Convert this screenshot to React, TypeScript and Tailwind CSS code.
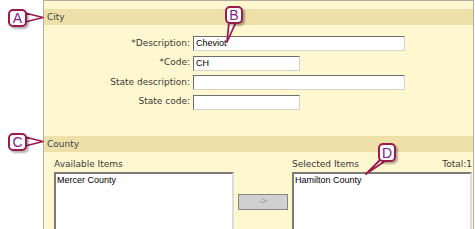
import React from "react";

const LABEL = "font-['DejaVu_Sans',Verdana,sans-serif] text-[9px] text-[#3a3a3a]";
const FIELD =
	"h-[15px] bg-white border border-t-[#6e6e6e] border-l-[#6e6e6e] border-b-[#d6d3c8] border-r-[#d6d3c8] px-[2px] text-[9px] leading-[13px] text-black font-['Liberation_Sans',Arial,sans-serif]";
const LIST =
	"h-[70px] w-[180px] bg-white border-2 border-t-[#7a7a7a] border-l-[#7a7a7a] border-b-[#dcdcdc] border-r-[#dcdcdc] px-[1px] text-[9px] leading-[12px] text-black font-['Liberation_Sans',Arial,sans-serif]";

const fields = [
	{ label: "*Description:", value: "Cheviot", wide: true },
	{ label: "*Code:", value: "CH", wide: false },
	{ label: "State description:", value: "", wide: true },
	{ label: "State code:", value: "", wide: false },
];

function Callout({ letter, className }: { letter: string; className: string }) {
	return (
		<div
			className={`absolute flex items-center justify-center bg-white border-2 border-[#9b1b4d] rounded-[5px] shadow-[2px_2px_2px_rgba(0,0,0,0.3)] text-[14px] leading-none text-[#7d2090] font-['Liberation_Sans',Arial,sans-serif] ${className}`}
		>
			{letter}
		</div>
	);
}

export default function App() {
	return (
		<div className="relative w-[475px] h-[229px] overflow-hidden bg-white">
			<div className="ml-[43px] w-[431px] h-full bg-[#fff7cf] border-l border-t border-r border-[#b3ae9c] pt-[8px]">
				<div className="h-[16px] bg-[#ede1a9] pl-[3px] leading-[16px] font-['DejaVu_Sans',Verdana,sans-serif] text-[9px] text-[#444444]">
					City
				</div>

				<div className="mt-[11px] flex flex-col gap-[4.5px]">
					{fields.map((f) => (
						<div key={f.label} className="flex items-center">
							<div className={`w-[146px] text-right ${LABEL}`}>{f.label}</div>
							<div className={`ml-[3px] ${f.wide ? "w-[212px]" : "w-[107px]"} ${FIELD}`}>{f.value}</div>
						</div>
					))}
				</div>

				<div className="mt-[26px] h-[16px] bg-[#ede1a9] pl-[3px] leading-[16px] font-['DejaVu_Sans',Verdana,sans-serif] text-[9px] text-[#444444]">
					County
				</div>

				<div className="mt-[6px] pl-[10px] flex gap-[4px]">
					<div className="flex flex-col">
						<div className={`leading-[13px] ${LABEL}`}>Available Items</div>
						<div className={`mt-[1px] ${LIST}`}>Mercer County</div>
					</div>
					<div className="pt-[36px]">
						<div className="w-[50px] h-[16px] bg-[#d0d0d0] border border-[#858585] flex items-center justify-center text-[9px] text-[#9a9a9a] font-['Liberation_Sans',Arial,sans-serif]">
							-&gt;
						</div>
					</div>
					<div className="flex flex-col">
						<div className={`flex justify-between leading-[13px] ${LABEL}`}>
							<span>Selected Items</span>
							<span>Total:1</span>
						</div>
						<div className={`mt-[1px] ${LIST}`}>Hamilton County</div>
					</div>
				</div>
			</div>

			<svg className="absolute inset-0 pointer-events-none" width="475" height="229" viewBox="0 0 475 229">
				<g fill="#ffffff" stroke="#9b1b4d" strokeWidth="1.8" strokeLinejoin="round">
					<polygon points="25,13 43,17.5 25,22" />
					<polygon points="25,137 43,141.5 25,146" />
					<polygon points="229,22 227,42 236,22" />
					<polygon points="381,159 366,174 388,159" />
				</g>
			</svg>

			<Callout letter="A" className="left-[8px] top-[9px] w-[19px] h-[18px]" />
			<Callout letter="B" className="left-[225px] top-[6px] w-[18px] h-[18px]" />
			<Callout letter="C" className="left-[8px] top-[133px] w-[19px] h-[18px]" />
			<Callout letter="D" className="left-[378px] top-[143px] w-[18px] h-[19px]" />
		</div>
	);
}
